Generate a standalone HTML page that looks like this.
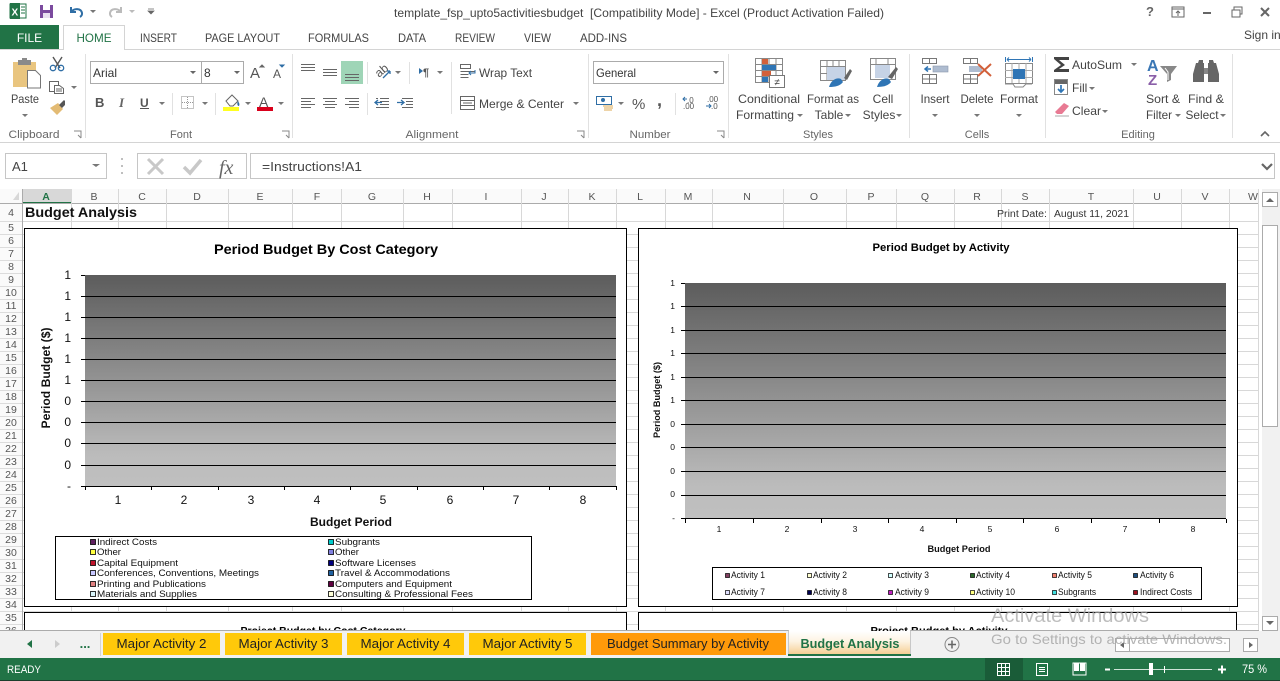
<!DOCTYPE html>
<html lang="en"><head><meta charset="utf-8"><title>Excel</title>
<style>
html,body{margin:0;padding:0;background:#fff;overflow:hidden;width:1280px;height:681px}
svg{display:block}
text{font-family:"Liberation Sans",sans-serif;white-space:pre}
.r{font-size:12px;fill:#444}
.g{font-size:11px;fill:#666;text-anchor:middle}
.t{font-size:12px;fill:#444;text-anchor:middle}
.c{font-size:10.5px;fill:#555;text-anchor:middle}
.n{font-size:10.5px;fill:#555;text-anchor:middle}
.l1{font-size:9.5px;fill:#111}
.l2{font-size:9px;fill:#111}
.tab{font-size:13px;fill:#222;text-anchor:middle}
</style></head><body>
<svg width="1280" height="681" viewBox="0 0 1280 681" xmlns="http://www.w3.org/2000/svg">
<defs>
<linearGradient id="pg" x1="0" y1="0" x2="0" y2="1"><stop offset="0" stop-color="#5c5c5c"/><stop offset=".5" stop-color="#939393"/><stop offset=".85" stop-color="#bbbbbb"/><stop offset="1" stop-color="#c0c0c0"/></linearGradient>
<linearGradient id="at" x1="0" y1="0" x2="0" y2="1"><stop offset="0" stop-color="#fff"/><stop offset=".45" stop-color="#fdf3e2"/><stop offset="1" stop-color="#f6cf95"/></linearGradient>
<pattern id="rows" x="0" y="221" width="10" height="13" patternUnits="userSpaceOnUse"><rect x="0" y="0" width="10" height="1" fill="#d8d8d8"/></pattern>
</defs>
<rect width="1280" height="681" fill="#fff"/>

<!-- title bar icons -->
<rect x="10" y="4" width="16" height="14" fill="#fff" stroke="#217346"/>
<rect x="10" y="3" width="10" height="16" fill="#217346"/>
<text x="11.500" y="15.500" style="font-size:10px;font-weight:bold;fill:#fff">X</text>
<path d="M21 7h4M21 10h4M21 13h4" stroke="#217346"/>
<rect x="40" y="5" width="13" height="13" fill="#7b4a9e"/>
<rect x="43" y="5" width="7" height="5" fill="#fff"/>
<rect x="43" y="13" width="7" height="5" fill="#e9e0f0"/>
<path d="M71 7v5h5M71 12c3-4 10-4 11 1 .4 2-.6 3-2 4" fill="none" stroke="#2f6ea5" stroke-width="2"/>
<path d="M90 10l3 3 3-3z" fill="#777"/>
<path d="M121 7v5h-5M121 12c-3-4-10-4-11 1-.4 2 .6 3 2 4" fill="none" stroke="#bbb" stroke-width="2"/>
<path d="M129 10l3 3 3-3z" fill="#bbb"/>
<path d="M148 9h6M148 11l3 3 3-3z" stroke="#666" fill="#666" stroke-width=".7"/>
<text x="394" y="17" style="font-size:12px;fill:#444" textLength="490" lengthAdjust="spacingAndGlyphs">template_fsp_upto5activitiesbudget  [Compatibility Mode] - Excel (Product Activation Failed)</text>
<text x="1146" y="16" style="font-size:13px;font-weight:bold;fill:#666">?</text>
<rect x="1172" y="7" width="12" height="10" fill="none" stroke="#666"/><path d="M1172 9h12M1178 16v-5M1176 13l2-2 2 2" fill="none" stroke="#666"/>
<path d="M1203 13h8" stroke="#666" stroke-width="2"/>
<rect x="1232" y="10" width="8" height="7" fill="none" stroke="#666"/><path d="M1234 10V7h8v7h-2" fill="none" stroke="#666"/>
<path d="M1261 8l8 8M1269 8l-8 8" stroke="#666" stroke-width="2"/>
<text x="1244" y="39" style="font-size:12px;fill:#444">Sign in</text>

<!-- tabs -->
<rect x="0" y="25" width="59" height="25" fill="#217346"/>
<text x="29.500" y="42" style="font-size:12px;fill:#fff;text-anchor:middle">FILE</text>
<path d="M0 49.500H63.500V25.500H124.500V49.500H1280" fill="none" stroke="#d4d4d4"/>
<text x="94" y="42" style="font-size:12px;fill:#217346;text-anchor:middle" textLength="35" lengthAdjust="spacingAndGlyphs">HOME</text>
<text x="140" y="42" class="r" textLength="37" lengthAdjust="spacingAndGlyphs">INSERT</text>
<text x="205" y="42" class="r" textLength="75" lengthAdjust="spacingAndGlyphs">PAGE LAYOUT</text>
<text x="308" y="42" class="r" textLength="61" lengthAdjust="spacingAndGlyphs">FORMULAS</text>
<text x="398" y="42" class="r" textLength="28" lengthAdjust="spacingAndGlyphs">DATA</text>
<text x="455" y="42" class="r" textLength="40" lengthAdjust="spacingAndGlyphs">REVIEW</text>
<text x="524" y="42" class="r" textLength="27" lengthAdjust="spacingAndGlyphs">VIEW</text>
<text x="580" y="42" class="r" textLength="47" lengthAdjust="spacingAndGlyphs">ADD-INS</text>

<!-- ribbon group separators -->
<path d="M85.500 54V138M292.500 54V138M588.500 54V138M728.500 54V138M909.500 54V138M1045.500 54V138M1232.500 54V138" stroke="#e1e1e1"/>
<path d="M0 142.500H1280" stroke="#d4d4d4"/>
<text x="34" y="138" class="g" textLength="51" lengthAdjust="spacingAndGlyphs">Clipboard</text>
<text x="181" y="138" class="g">Font</text>
<text x="432" y="138" class="g" textLength="53" lengthAdjust="spacingAndGlyphs">Alignment</text>
<text x="650" y="138" class="g" textLength="41" lengthAdjust="spacingAndGlyphs">Number</text>
<text x="818" y="138" class="g">Styles</text>
<text x="977" y="138" class="g">Cells</text>
<text x="1138" y="138" class="g">Editing</text>
<path d="M74 131h7v7M78 135l3 3M282 131h7v7M286 135l3 3M577 131h7v7M581 135l3 3M717 131h7v7M721 135l3 3" fill="none" stroke="#888"/>
<path d="M1261 136l4-4 4 4" fill="none" stroke="#666" stroke-width="1.600"/>

<!-- clipboard -->
<rect x="13" y="62" width="23" height="25" fill="#e9c57f"/>
<rect x="18" y="60" width="13" height="5" fill="#8a8a8a"/><rect x="22" y="58" width="5" height="4" fill="#8a8a8a"/>
<path d="M27.500 70.500h8l5 5v12.500h-13z" fill="#fff" stroke="#777"/>
<text x="25" y="103" class="t" textLength="28" lengthAdjust="spacingAndGlyphs">Paste</text>
<path d="M22 114l3 3 3-3z" fill="#777"/>
<path d="M53 57l7 11M62 57l-7 11" stroke="#555" stroke-width="1.400"/>
<circle cx="53" cy="68" r="2.700" fill="none" stroke="#2f6ea5" stroke-width="1.300"/><circle cx="61" cy="68" r="2.700" fill="none" stroke="#2f6ea5" stroke-width="1.300"/>
<path d="M49.500 81.500h9v10h-9z" fill="#fff" stroke="#666"/><path d="M54.500 85.500h5l4 3v5h-9z" fill="#fff" stroke="#666"/><path d="M56 89h6M56 91h6" stroke="#666"/>
<path d="M71 86l3 3 3-3z" fill="#777"/>
<path d="M50 108l8-5 5 6-6 6z" fill="#e3bb74"/><path d="M59 105l5-5 1 1v4l-3 3z" fill="#555"/>

<!-- font -->
<rect x="90.500" y="61.500" width="111" height="22" fill="#fff" stroke="#ababab"/>
<rect x="201.500" y="61.500" width="42" height="22" fill="#fff" stroke="#ababab"/>
<text x="93" y="77" style="font-size:12px;fill:#333">Arial</text>
<text x="204" y="77" style="font-size:12px;fill:#333">8</text>
<path d="M190 71l3 3 3-3zM234 71l3 3 3-3z" fill="#666"/>
<text x="250" y="78" style="font-size:15px;fill:#555">A</text><path d="M260 67l2-2 2 2z" fill="#666" stroke="#666"/>
<text x="273" y="78" style="font-size:12px;fill:#555">A</text><path d="M280 65l2 2 2-2z" fill="#2f6ea5" stroke="#2f6ea5"/>
<text x="95" y="107" style="font-size:13px;font-weight:bold;fill:#555">B</text>
<text x="119" y="107" style="font-size:13px;font-weight:bold;font-style:italic;fill:#666;font-family:'Liberation Serif',serif">I</text>
<text x="140" y="107" style="font-size:12px;font-weight:bold;fill:#555">U</text><path d="M140 108.500h9" stroke="#555"/>
<path d="M159 102l3 3 3-3z" fill="#777"/>
<path d="M172.500 93v22" stroke="#e1e1e1"/>
<rect x="181.500" y="96.500" width="12" height="12" fill="none" stroke="#888" stroke-dasharray="1 1"/><path d="M187.500 97v12M182 102.500h12" stroke="#999" stroke-dasharray="1 1"/>
<path d="M202 102l3 3 3-3z" fill="#777"/>
<path d="M215.500 93v22" stroke="#e1e1e1"/>
<path d="M226 101l6-6 6 6-5 5h-3z" fill="#fff" stroke="#666"/><path d="M238 101c1 2 2 3 1 5-2 0-2-3-1-5z" fill="#2f6ea5"/>
<rect x="223" y="107" width="16" height="4" fill="#ffff20"/>
<path d="M245 102l3 3 3-3z" fill="#777"/>
<text x="259" y="107" style="font-size:14px;fill:#555">A</text>
<rect x="257" y="107" width="16" height="4" fill="#d9001b"/>
<path d="M278 102l3 3 3-3z" fill="#777"/>

<!-- alignment -->
<path d="M301 64.500h14M301 67.500h14M301 70.500h14" stroke="#666"/>
<path d="M323 69.500h14M323 72.500h14M323 75.500h14" stroke="#666"/>
<rect x="341" y="61" width="22" height="23" fill="#9fd5b7"/>
<path d="M345 74.500h14M345 77.500h14M345 80.500h14" stroke="#666"/>
<path d="M367.500 62v22" stroke="#e1e1e1"/>
<text x="375" y="75" style="font-size:12px;fill:#555" transform="rotate(-40 381 71)">ab</text><path d="M383 78l7-7M390 71h-3M390 71v3" fill="none" stroke="#2f6ea5" stroke-width="1.300"/>
<path d="M395 71l3 3 3-3z" fill="#777"/>
<path d="M409.500 62v22" stroke="#e1e1e1"/>
<path d="M419 68l4 3-4 3z" fill="#2f6ea5"/>
<text x="423" y="76" style="font-size:11px;font-weight:bold;fill:#555">¶</text>
<path d="M437 71l3 3 3-3z" fill="#777"/>
<path d="M451.500 62v52" stroke="#e1e1e1"/>
<path d="M301 98.500h14M301 101.500h10M301 104.500h14M301 107.500h10M323 98.500h14M325 101.500h10M323 104.500h14M325 107.500h10M345 98.500h14M349 101.500h10M345 104.500h14M349 107.500h10" stroke="#666"/>
<path d="M367.500 93v22" stroke="#e1e1e1"/>
<path d="M380 98.500h9M380 101.500h9M380 104.500h9M376 107.500h13M376 98.500h2" stroke="#666"/><path d="M375 102.500h7M378 100l-3 2.500 3 2.500" fill="none" stroke="#2f6ea5" stroke-width="1.300"/>
<path d="M402 98.500h11M402 107.500h11M406 101.500h7M406 104.500h7" stroke="#666"/><path d="M397 102.500h7M401 100l3 2.500-3 2.500" fill="none" stroke="#2f6ea5" stroke-width="1.300"/>
<path d="M460.500 64.500h10v4h-10zM460.500 71.500h14M460.500 74.500h8M460.500 77.500h8" fill="none" stroke="#666"/><path d="M475 70v3h-6m2-2l-2 2 2 2" fill="none" stroke="#2f6ea5"/>
<text x="479" y="77" class="r" textLength="53" lengthAdjust="spacingAndGlyphs">Wrap Text</text>
<rect x="460.500" y="96.500" width="14" height="13" fill="none" stroke="#666"/><path d="M461 100.500h13M461 105.500h13M463 103h9" stroke="#666"/>
<text x="479" y="108" class="r" textLength="85" lengthAdjust="spacingAndGlyphs">Merge &amp; Center</text>
<path d="M573 102l3 3 3-3z" fill="#777"/>

<!-- number -->
<rect x="593.500" y="61.500" width="130" height="22" fill="#fff" stroke="#ababab"/>
<text x="596" y="77" style="font-size:12px;fill:#333" textLength="40" lengthAdjust="spacingAndGlyphs">General</text>
<path d="M713 71l3 3 3-3z" fill="#666"/>
<rect x="596.500" y="96.500" width="15" height="8" fill="#fff" stroke="#2f6ea5"/><circle cx="603" cy="100" r="2" fill="#2f6ea5"/>
<path d="M603 106h10M604 108h9M604 110h8" stroke="#e3bb74" stroke-width="1.300"/>
<path d="M618 102l3 3 3-3z" fill="#777"/>
<text x="632" y="109" style="font-size:15px;fill:#555">%</text>
<text x="657" y="106" style="font-size:18px;font-weight:bold;fill:#555">,</text>
<path d="M675.500 93v22" stroke="#e1e1e1"/>
<text x="687" y="103" style="font-size:8px;fill:#555">.0</text><text x="683" y="109" style="font-size:8px;fill:#555">.00</text><path d="M683 99h4M685 97l-2 2 2 2" fill="none" stroke="#2f6ea5"/>
<text x="707" y="102" style="font-size:8px;fill:#555">.00</text><text x="711" y="109" style="font-size:8px;fill:#555">.0</text><path d="M706 106h5M709 104l2 2-2 2" fill="none" stroke="#2f6ea5"/>

<!-- styles -->
<g fill="none" stroke="#888">
<rect x="755.500" y="58.500" width="27" height="24" fill="#fff"/><path d="M762 58v24M769 58v24M776 58v24M755 64.500h28M755 70.500h28M755 76.500h28"/>
</g>
<rect x="762" y="59" width="6" height="5" fill="#d2603a"/><rect x="762" y="65" width="14" height="5" fill="#2f75b5"/><rect x="762" y="71" width="9" height="5" fill="#d2603a"/><rect x="762" y="77" width="6" height="5" fill="#2f75b5"/>
<rect x="769.500" y="75.500" width="15" height="12" fill="#fff" stroke="#777"/><text x="777" y="85.500" style="font-size:10px;fill:#444;text-anchor:middle">≠</text>
<text x="769" y="103" class="t" textLength="62" lengthAdjust="spacingAndGlyphs">Conditional</text>
<text x="765" y="119" class="t" textLength="58" lengthAdjust="spacingAndGlyphs">Formatting</text>
<path d="M797 114l3 3 3-3z" fill="#777"/>
<g fill="none" stroke="#888">
<rect x="820.500" y="60.500" width="25" height="20" fill="#fff"/><path d="M827 60v20M833 60v20M839 60v20M820 66.500h25M820 73.500h25"/>
</g>
<rect x="827" y="67" width="18" height="13" fill="#c6d3e6"/>
<path d="M844 78l6-9 2 2-5 9z" fill="#666"/><path d="M829 87c2-7 8-10 12-8l2 3c-3 4-8 5-14 5z" fill="#2f75b5"/>
<text x="833" y="103" class="t" textLength="52" lengthAdjust="spacingAndGlyphs">Format as</text>
<text x="829" y="119" class="t">Table</text>
<path d="M845 114l3 3 3-3z" fill="#777"/>
<g fill="none" stroke="#888">
<rect x="870.500" y="58.500" width="25" height="21" fill="#fff"/><path d="M870 64.500h26M876 58v6M888 58v6"/>
</g>
<rect x="875" y="65" width="15" height="13" fill="#c6d3e6"/>
<path d="M888 77l8-10 2 2-6 10z" fill="#666"/><path d="M877 87c2-7 8-10 12-8l2 3c-3 4-8 5-14 5z" fill="#2f75b5"/>
<text x="883" y="103" class="t">Cell</text>
<text x="879" y="119" class="t">Styles</text>
<path d="M896 114l3 3 3-3z" fill="#777"/>

<!-- cells -->
<g fill="none" stroke="#777">
<path d="M922.500 58.500h14v5h-14zM929.500 58.500v5M922.500 74.500h14v9h-14zM929.500 74.500v9M922.500 79h14"/>
</g>
<rect x="933" y="66" width="15" height="6" fill="#aebcd0" stroke="#8a98ac" stroke-width=".6"/>
<path d="M925 69h6M928 66.500L925 69l3 2.500" fill="none" stroke="#2f75b5" stroke-width="1.500"/>
<text x="935" y="103" class="t" textLength="29" lengthAdjust="spacingAndGlyphs">Insert</text>
<path d="M932 114l3 3 3-3z" fill="#777"/>
<g fill="none" stroke="#777">
<path d="M963.500 58.500h14v5h-14zM970.500 58.500v5M963.500 74.500h14v9h-14zM970.500 74.500v9M963.500 79h14"/>
</g>
<rect x="969" y="66" width="13" height="6" fill="#aebcd0"/>
<path d="M978 64l13 12M991 64l-13 12" stroke="#d2603a" stroke-width="2"/>
<text x="977" y="103" class="t" textLength="33" lengthAdjust="spacingAndGlyphs">Delete</text>
<path d="M974 114l3 3 3-3z" fill="#777"/>
<rect x="1005.500" y="63.500" width="27" height="20" fill="#fff" stroke="#888"/>
<path d="M1012 63v20M1019 63v20M1026 63v20M1005 70.500h28M1005 77.500h28" stroke="#aaa"/>
<rect x="1013" y="69" width="12" height="10" fill="#2f75b5"/>
<path d="M1005.500 57v5M1032.500 57v5M1007 59.500h24M1007 59.500l2-2M1007 59.500l2 2M1031 59.500l-2-2M1031 59.500l-2 2" fill="none" stroke="#2f75b5"/>
<path d="M1005 84h8l2 3h8l3-3h6" fill="none" stroke="#888"/>
<text x="1019" y="103" class="t" textLength="38" lengthAdjust="spacingAndGlyphs">Format</text>
<path d="M1016 114l3 3 3-3z" fill="#777"/>

<!-- editing -->
<path d="M1054 57h15v3h-10l6 5-6 4h10v3h-15v-2l7-5-7-6z" fill="#444"/>
<text x="1072" y="69" class="r" textLength="50" lengthAdjust="spacingAndGlyphs">AutoSum</text>
<path d="M1131 63l3 3 3-3z" fill="#777"/>
<rect x="1054.500" y="79.500" width="13" height="15" fill="#fff" stroke="#888"/><rect x="1055" y="80" width="12" height="4" fill="#666"/>
<path d="M1061 85v7M1058 89l3 3 3-3" fill="none" stroke="#2f75b5" stroke-width="1.700"/>
<text x="1072" y="92" class="r">Fill</text>
<path d="M1089 87l3 3 3-3z" fill="#777"/>
<path d="M1055 112l9-9 5 3-7 8h-5z" fill="#e87a93"/><path d="M1055 116h14" stroke="#aaa"/>
<text x="1072" y="115" class="r" textLength="29" lengthAdjust="spacingAndGlyphs">Clear</text>
<path d="M1102 110l3 3 3-3z" fill="#777"/>
<text x="1147" y="71" style="font-size:16px;font-weight:bold;fill:#3a77b5">A</text>
<text x="1148" y="85" style="font-size:15px;font-weight:bold;fill:#8a5fa8">Z</text>
<path d="M1160 66h17l-6 8v6l-4 2v-8z" fill="#888"/><path d="M1165 68l3 4v8" stroke="#fff" fill="none"/>
<path d="M1193 82v-8l3-11h2l1-3h4v3h1v19zM1219 82v-8l-3-11h-2l-1-3h-4v3h-1v19z" fill="#666"/>
<path d="M1204 68h4v6h-4z" fill="#888"/>
<text x="1163" y="103" class="t" textLength="34" lengthAdjust="spacingAndGlyphs">Sort &amp;</text>
<text x="1159" y="119" class="t" textLength="26" lengthAdjust="spacingAndGlyphs">Filter</text>
<path d="M1175 114l3 3 3-3z" fill="#777"/>
<text x="1206" y="103" class="t" textLength="36" lengthAdjust="spacingAndGlyphs">Find &amp;</text>
<text x="1202" y="119" class="t" textLength="33" lengthAdjust="spacingAndGlyphs">Select</text>
<path d="M1220 114l3 3 3-3z" fill="#777"/>

<!-- formula bar -->
<rect x="5.500" y="153.500" width="101" height="25" fill="#fff" stroke="#c6c6c6"/>
<text x="12" y="171" style="font-size:13px;fill:#444">A1</text>
<path d="M92 164l4 3 4-3z" fill="#777"/>
<path d="M122 158v2M122 165v2M122 172v2" stroke="#aaa" stroke-width="1.500"/>
<rect x="137.500" y="153.500" width="109" height="25" fill="#fff" stroke="#c6c6c6"/>
<path d="M148 159l15 15M163 159l-15 15" stroke="#c8c8c8" stroke-width="3"/>
<path d="M184 167l6 6 11-13" fill="none" stroke="#c8c8c8" stroke-width="3.500"/>
<text x="219" y="174" style="font-size:20px;font-style:italic;font-family:'Liberation Serif',serif;fill:#666">fx</text>
<rect x="250.500" y="153.500" width="1024" height="25" fill="#fff" stroke="#c6c6c6"/>
<text x="262" y="171" style="font-size:13px;fill:#444" textLength="100" lengthAdjust="spacingAndGlyphs">=Instructions!A1</text>
<path d="M1262 164l5 5 5-5" fill="none" stroke="#666" stroke-width="2.200"/>

<!-- sheet grid -->
<rect x="0" y="189" width="1259" height="14" fill="#fafafa"/>
<rect x="22" y="189" width="49" height="14" fill="#d8d8d8"/>
<rect x="22" y="202" width="49" height="2" fill="#217346"/>
<path d="M0 203.500H1259" stroke="#ababab"/>
<path d="M22.500 189V630" stroke="#ababab"/>
<path d="M19 192v8h-6z" fill="#d8d8d8"/>
<rect x="23" y="221" width="1236" height="410" fill="url(#rows)"/>
<path d="M71.500 189V228M118.500 189V228M166.500 189V228M228.500 189V228M292.500 189V228M341.500 189V228M403.500 189V228M452.500 189V228M521.500 189V228M568.500 189V228M616.500 189V228M665.500 189V228M712.500 189V228M783.500 189V228M846.500 189V228M896.500 189V228M954.500 189V228M1001.500 189V228M1049.500 189V228M1133.500 189V228M1181.500 189V228M1229.500 189V631M1258.500 189V631" stroke="#d8d8d8"/>
<path d="M71.500 607V612M118.500 607V612M166.500 607V612M228.500 607V612M292.500 607V612M341.500 607V612M403.500 607V612M452.500 607V612M521.500 607V612M568.500 607V612M616.500 607V612M665.500 607V612M712.500 607V612M783.500 607V612M846.500 607V612M896.500 607V612M954.500 607V612M1001.500 607V612M1049.500 607V612M1133.500 607V612M1181.500 607V612" stroke="#d8d8d8"/>
<text x="46" y="200" class="c" style="fill:#217346;font-weight:bold">A</text>
<text x="94" y="200" class="c">B</text><text x="142" y="200" class="c">C</text><text x="197" y="200" class="c">D</text><text x="260" y="200" class="c">E</text><text x="317" y="200" class="c">F</text><text x="372" y="200" class="c">G</text><text x="427" y="200" class="c">H</text><text x="486" y="200" class="c">I</text><text x="544" y="200" class="c">J</text><text x="592" y="200" class="c">K</text><text x="640" y="200" class="c">L</text><text x="688" y="200" class="c">M</text><text x="747" y="200" class="c">N</text><text x="814" y="200" class="c">O</text><text x="871" y="200" class="c">P</text><text x="925" y="200" class="c">Q</text><text x="977" y="200" class="c">R</text><text x="1025" y="200" class="c">S</text><text x="1091" y="200" class="c">T</text><text x="1157" y="200" class="c">U</text><text x="1205" y="200" class="c">V</text><text x="1253" y="200" class="c">W</text>
<rect x="0" y="204" width="22" height="427" fill="#fafafa"/>
<path d="M0 221.500H22M0 234.500H22M0 247.500H22M0 260.500H22M0 273.500H22M0 286.500H22M0 299.500H22M0 312.500H22M0 325.500H22M0 338.500H22M0 351.500H22M0 364.500H22M0 377.500H22M0 390.500H22M0 403.500H22M0 416.500H22M0 429.500H22M0 442.500H22M0 455.500H22M0 468.500H22M0 481.500H22M0 494.500H22M0 507.500H22M0 520.500H22M0 533.500H22M0 546.500H22M0 559.500H22M0 572.500H22M0 585.500H22M0 598.500H22M0 611.500H22M0 624.500H22" stroke="#dcdcdc"/>
<text x="11" y="216" class="n">4</text><text x="11" y="231" class="n">5</text><text x="11" y="244" class="n">6</text><text x="11" y="257" class="n">7</text><text x="11" y="270" class="n">8</text><text x="11" y="283" class="n">9</text><text x="11" y="296" class="n">10</text><text x="11" y="309" class="n">11</text><text x="11" y="322" class="n">12</text><text x="11" y="335" class="n">13</text><text x="11" y="348" class="n">14</text><text x="11" y="361" class="n">15</text><text x="11" y="374" class="n">16</text><text x="11" y="387" class="n">17</text><text x="11" y="400" class="n">18</text><text x="11" y="413" class="n">19</text><text x="11" y="426" class="n">20</text><text x="11" y="439" class="n">21</text><text x="11" y="452" class="n">22</text><text x="11" y="465" class="n">23</text><text x="11" y="478" class="n">24</text><text x="11" y="491" class="n">25</text><text x="11" y="504" class="n">26</text><text x="11" y="517" class="n">27</text><text x="11" y="530" class="n">28</text><text x="11" y="543" class="n">29</text><text x="11" y="556" class="n">30</text><text x="11" y="569" class="n">31</text><text x="11" y="582" class="n">32</text><text x="11" y="595" class="n">33</text><text x="11" y="608" class="n">34</text><text x="11" y="621" class="n">35</text><text x="11" y="634" class="n">36</text>

<text x="25" y="217" style="font-size:14px;font-weight:bold;fill:#111" textLength="112" lengthAdjust="spacingAndGlyphs">Budget Analysis</text>
<text x="997" y="217" style="font-size:10px;fill:#333" textLength="50" lengthAdjust="spacingAndGlyphs">Print Date:</text>
<text x="1054" y="217" style="font-size:10px;fill:#333" textLength="75" lengthAdjust="spacingAndGlyphs">August 11, 2021</text>

<!-- chart 1 -->
<rect x="24.500" y="228.500" width="602" height="378" fill="#fff" stroke="#000"/>
<text x="326" y="254" style="font-size:14px;font-weight:bold;fill:#000;text-anchor:middle" textLength="224" lengthAdjust="spacingAndGlyphs">Period Budget By Cost Category</text>
<rect x="85" y="275" width="531" height="211" fill="url(#pg)"/>
<path d="M85 296.500H616M85 317.500H616M85 338.500H616M85 359.500H616M85 380.500H616M85 401.500H616M85 422.500H616M85 443.500H616M85 465.500H616M85 486.500H616" stroke="#000"/>
<path d="M81 275.500H85M81 296.500H85M81 317.500H85M81 338.500H85M81 359.500H85M81 380.500H85M81 401.500H85M81 422.500H85M81 443.500H85M81 465.500H85M81 486.500H85" stroke="#000"/>
<path d="M85.500 486V490M151.500 486V490M218.500 486V490M284.500 486V490M350.500 486V490M417.500 486V490M483.500 486V490M549.500 486V490M616.500 486V490" stroke="#000"/>
<g style="fill:#111;text-anchor:end">
<text x="71" y="279" style="font-size:12px">1</text><text x="71" y="300" style="font-size:12px">1</text><text x="71" y="321" style="font-size:12px">1</text><text x="71" y="342" style="font-size:12px">1</text><text x="71" y="363" style="font-size:12px">1</text><text x="71" y="384" style="font-size:12px">1</text><text x="71" y="405" style="font-size:12px">0</text><text x="71" y="426" style="font-size:12px">0</text><text x="71" y="447" style="font-size:12px">0</text><text x="71" y="469" style="font-size:12px">0</text><text x="71" y="490" style="font-size:12px">-</text>
</g>
<g style="fill:#111;text-anchor:middle">
<text x="118" y="504" style="font-size:12px">1</text><text x="184" y="504" style="font-size:12px">2</text><text x="251" y="504" style="font-size:12px">3</text><text x="317" y="504" style="font-size:12px">4</text><text x="383" y="504" style="font-size:12px">5</text><text x="450" y="504" style="font-size:12px">6</text><text x="516" y="504" style="font-size:12px">7</text><text x="583" y="504" style="font-size:12px">8</text>
</g>
<text x="50" y="378" transform="rotate(-90 50 378)" style="font-size:12px;font-weight:bold;fill:#111;text-anchor:middle" textLength="101" lengthAdjust="spacingAndGlyphs">Period Budget ($)</text>
<text x="351" y="526" style="font-size:12px;font-weight:bold;fill:#111;text-anchor:middle" textLength="82" lengthAdjust="spacingAndGlyphs">Budget Period</text>
<rect x="55.500" y="536.500" width="476" height="63" fill="#fff" stroke="#000"/>
<g stroke="#000" stroke-width=".8">
<rect x="90.500" y="539.500" width="5" height="5" fill="#602060"/><rect x="90.500" y="549.500" width="5" height="5" fill="#ffff40"/><rect x="90.500" y="560.500" width="5" height="5" fill="#c0142c"/><rect x="90.500" y="570.500" width="5" height="5" fill="#c8c8ff"/><rect x="90.500" y="581.500" width="5" height="5" fill="#e08080"/><rect x="90.500" y="591.500" width="5" height="5" fill="#d8f4fa"/>
<rect x="328.500" y="539.500" width="5" height="5" fill="#00cccc"/><rect x="328.500" y="549.500" width="5" height="5" fill="#8080e0"/><rect x="328.500" y="560.500" width="5" height="5" fill="#000080"/><rect x="328.500" y="570.500" width="5" height="5" fill="#2060a0"/><rect x="328.500" y="581.500" width="5" height="5" fill="#600040"/><rect x="328.500" y="591.500" width="5" height="5" fill="#ffffd8"/>
</g>
<text x="97" y="545" class="l1" textLength="60" lengthAdjust="spacingAndGlyphs">Indirect Costs</text>
<text x="97" y="555" class="l1" textLength="24" lengthAdjust="spacingAndGlyphs">Other</text>
<text x="97" y="566" class="l1" textLength="81" lengthAdjust="spacingAndGlyphs">Capital Equipment</text>
<text x="97" y="576" class="l1" textLength="162" lengthAdjust="spacingAndGlyphs">Conferences, Conventions, Meetings</text>
<text x="97" y="587" class="l1" textLength="109" lengthAdjust="spacingAndGlyphs">Printing and Publications</text>
<text x="97" y="597" class="l1" textLength="100" lengthAdjust="spacingAndGlyphs">Materials and Supplies</text>
<text x="335" y="545" class="l1" textLength="45" lengthAdjust="spacingAndGlyphs">Subgrants</text>
<text x="335" y="555" class="l1" textLength="24" lengthAdjust="spacingAndGlyphs">Other</text>
<text x="335" y="566" class="l1" textLength="81" lengthAdjust="spacingAndGlyphs">Software Licenses</text>
<text x="335" y="576" class="l1" textLength="115" lengthAdjust="spacingAndGlyphs">Travel &amp; Accommodations</text>
<text x="335" y="587" class="l1" textLength="117" lengthAdjust="spacingAndGlyphs">Computers and Equipment</text>
<text x="335" y="597" class="l1" textLength="138" lengthAdjust="spacingAndGlyphs">Consulting &amp; Professional Fees</text>

<!-- chart 2 -->
<rect x="638.500" y="228.500" width="599" height="378" fill="#fff" stroke="#000"/>
<text x="941" y="251" style="font-size:11px;font-weight:bold;fill:#000;text-anchor:middle" textLength="137" lengthAdjust="spacingAndGlyphs">Period Budget by Activity</text>
<rect x="685" y="283" width="541" height="236" fill="url(#pg)"/>
<path d="M685 306.500H1226M685 330.500H1226M685 353.500H1226M685 377.500H1226M685 400.500H1226M685 424.500H1226M685 447.500H1226M685 471.500H1226M685 495.500H1226M685 518.500H1226" stroke="#000"/>
<path d="M681 283.500H685M681 306.500H685M681 330.500H685M681 353.500H685M681 377.500H685M681 400.500H685M681 424.500H685M681 447.500H685M681 471.500H685M681 495.500H685M681 518.500H685" stroke="#000"/>
<path d="M685.500 519V523M753.500 519V523M821.500 519V523M888.500 519V523M956.500 519V523M1023.500 519V523M1091.500 519V523M1159.500 519V523M1226.500 519V523" stroke="#000"/>
<g style="fill:#111;text-anchor:end">
<text x="675" y="286" style="font-size:8.500px">1</text><text x="675" y="309" style="font-size:8.500px">1</text><text x="675" y="333" style="font-size:8.500px">1</text><text x="675" y="356" style="font-size:8.500px">1</text><text x="675" y="380" style="font-size:8.500px">1</text><text x="675" y="403" style="font-size:8.500px">1</text><text x="675" y="427" style="font-size:8.500px">0</text><text x="675" y="450" style="font-size:8.500px">0</text><text x="675" y="474" style="font-size:8.500px">0</text><text x="675" y="497" style="font-size:8.500px">0</text><text x="675" y="521" style="font-size:8.500px">-</text>
</g>
<g style="fill:#111;text-anchor:middle">
<text x="719" y="532" style="font-size:8.500px">1</text><text x="787" y="532" style="font-size:8.500px">2</text><text x="855" y="532" style="font-size:8.500px">3</text><text x="922" y="532" style="font-size:8.500px">4</text><text x="990" y="532" style="font-size:8.500px">5</text><text x="1057" y="532" style="font-size:8.500px">6</text><text x="1125" y="532" style="font-size:8.500px">7</text><text x="1193" y="532" style="font-size:8.500px">8</text>
</g>
<text x="660" y="400" transform="rotate(-90 660 400)" style="font-size:9px;font-weight:bold;fill:#111;text-anchor:middle" textLength="76" lengthAdjust="spacingAndGlyphs">Period Budget ($)</text>
<text x="959" y="552" style="font-size:9px;font-weight:bold;fill:#111;text-anchor:middle" textLength="63" lengthAdjust="spacingAndGlyphs">Budget Period</text>
<rect x="712.500" y="567.500" width="489" height="32" fill="#fff" stroke="#000"/>
<g stroke="#000" stroke-width=".7">
<rect x="725.500" y="573.500" width="4" height="4" fill="#804060"/><rect x="807.500" y="573.500" width="4" height="4" fill="#ffffd0"/><rect x="888.500" y="573.500" width="4" height="4" fill="#d0ffff"/><rect x="970.500" y="573.500" width="4" height="4" fill="#2c6a2c"/><rect x="1052.500" y="573.500" width="4" height="4" fill="#f08070"/><rect x="1133.500" y="573.500" width="4" height="4" fill="#205080"/>
<rect x="725.500" y="590.500" width="4" height="4" fill="#e0e0ff"/><rect x="807.500" y="590.500" width="4" height="4" fill="#000050"/><rect x="888.500" y="590.500" width="4" height="4" fill="#c020c0"/><rect x="970.500" y="590.500" width="4" height="4" fill="#ffff80"/><rect x="1052.500" y="590.500" width="4" height="4" fill="#40e0e0"/><rect x="1133.500" y="590.500" width="4" height="4" fill="#a01020"/>
</g>
<text x="731" y="578" class="l2" textLength="34" lengthAdjust="spacingAndGlyphs">Activity 1</text><text x="813" y="578" class="l2" textLength="34" lengthAdjust="spacingAndGlyphs">Activity 2</text><text x="895" y="578" class="l2" textLength="34" lengthAdjust="spacingAndGlyphs">Activity 3</text><text x="976" y="578" class="l2" textLength="34" lengthAdjust="spacingAndGlyphs">Activity 4</text><text x="1058" y="578" class="l2" textLength="34" lengthAdjust="spacingAndGlyphs">Activity 5</text><text x="1140" y="578" class="l2" textLength="34" lengthAdjust="spacingAndGlyphs">Activity 6</text>
<text x="731" y="595" class="l2" textLength="34" lengthAdjust="spacingAndGlyphs">Activity 7</text><text x="813" y="595" class="l2" textLength="34" lengthAdjust="spacingAndGlyphs">Activity 8</text><text x="895" y="595" class="l2" textLength="34" lengthAdjust="spacingAndGlyphs">Activity 9</text><text x="976" y="595" class="l2" textLength="39" lengthAdjust="spacingAndGlyphs">Activity 10</text><text x="1058" y="595" class="l2" textLength="38" lengthAdjust="spacingAndGlyphs">Subgrants</text><text x="1140" y="595" class="l2" textLength="52" lengthAdjust="spacingAndGlyphs">Indirect Costs</text>

<!-- lower charts -->
<rect x="24.500" y="612.500" width="602" height="40" fill="#fff" stroke="#000"/>
<rect x="638.500" y="612.500" width="598" height="40" fill="#fff" stroke="#000"/>
<text x="323" y="634" style="font-size:10.500px;font-weight:bold;fill:#000;text-anchor:middle" textLength="165" lengthAdjust="spacingAndGlyphs">Project Budget by Cost Category</text>
<text x="939" y="634" style="font-size:10.500px;font-weight:bold;fill:#000;text-anchor:middle" textLength="137" lengthAdjust="spacingAndGlyphs">Project Budget by Activity</text>

<!-- scrollbar vertical -->
<rect x="1259" y="189" width="21" height="442" fill="#f1f1f1"/>
<rect x="1259" y="189" width="3" height="442" fill="#fff"/>
<rect x="1262.500" y="192.500" width="15" height="14" fill="#fff" stroke="#ababab"/>
<path d="M1266 202l4-4 4 4z" fill="#666"/>
<rect x="1262.500" y="225.500" width="15" height="201" fill="#fff" stroke="#ababab"/>
<rect x="1262.500" y="616.500" width="15" height="14" fill="#fff" stroke="#ababab"/>
<path d="M1266 621l4 4 4-4z" fill="#666"/>

<!-- tab bar -->
<rect x="0" y="631" width="1280" height="27" fill="#f1f1f1"/>
<path d="M0 630.500H789M910 630.500H1259" stroke="#ababab"/>
<path d="M32 640l-5 4 5 4z" fill="#217346"/><path d="M55 640l5 4-5 4z" fill="#ccc"/>
<text x="85" y="648" style="font-size:13px;font-weight:bold;fill:#217346;text-anchor:middle">...</text>
<path d="M100.500 633V656" stroke="#d4d4d4"/>
<rect x="103" y="633" width="117" height="22" fill="#ffc90a"/>
<rect x="225" y="633" width="117" height="22" fill="#ffc90a"/>
<rect x="347" y="633" width="117" height="22" fill="#ffc90a"/>
<rect x="469" y="633" width="117" height="22" fill="#ffc90a"/>
<rect x="591" y="633" width="195" height="22" fill="#ff9a0a"/>
<text x="161.500" y="648" class="tab" textLength="90" lengthAdjust="spacingAndGlyphs">Major Activity 2</text>
<text x="283.500" y="648" class="tab" textLength="90" lengthAdjust="spacingAndGlyphs">Major Activity 3</text>
<text x="405.500" y="648" class="tab" textLength="90" lengthAdjust="spacingAndGlyphs">Major Activity 4</text>
<text x="527.500" y="648" class="tab" textLength="90" lengthAdjust="spacingAndGlyphs">Major Activity 5</text>
<text x="688" y="648" class="tab" textLength="162" lengthAdjust="spacingAndGlyphs">Budget Summary by Activity</text>
<rect x="789" y="631" width="121" height="23" fill="url(#at)"/>
<path d="M788.500 630.500V655M910.500 630.500V655" stroke="#c8c8c8"/>
<rect x="788" y="654" width="123" height="2" fill="#217346"/>
<text x="850" y="648" style="font-size:13px;font-weight:bold;fill:#217346;text-anchor:middle" textLength="99" lengthAdjust="spacingAndGlyphs">Budget Analysis</text>
<circle cx="952" cy="644.500" r="7" fill="none" stroke="#888"/><path d="M948 644.500h8M952 640.500v8" stroke="#666" stroke-width="1.500"/>
<!-- horizontal scrollbar -->
<rect x="1115.500" y="638.500" width="14" height="13" fill="#fff" stroke="#ababab"/><path d="M1124 642l-4 3 4 3z" fill="#666"/>
<rect x="1129.500" y="638.500" width="100" height="13" fill="#fff" stroke="#ababab"/>
<rect x="1243.500" y="638.500" width="14" height="13" fill="#fff" stroke="#ababab"/><path d="M1249 642l4 3-4 3z" fill="#666"/>
<!-- watermark -->
<text x="991" y="622" style="font-size:19px;fill:#a8a8a8;opacity:.75" textLength="158" lengthAdjust="spacingAndGlyphs">Activate Windows</text>
<text x="991" y="644" style="font-size:14px;fill:#a8a8a8;opacity:.85" textLength="236" lengthAdjust="spacingAndGlyphs">Go to Settings to activate Windows.</text>

<!-- status bar -->
<rect x="0" y="658" width="1280" height="23" fill="#217346"/>
<path d="M0 680.500H1280" stroke="#1c3d2b"/>
<text x="7" y="673" style="font-size:11px;fill:#fff" textLength="34" lengthAdjust="spacingAndGlyphs">READY</text>
<rect x="985" y="658" width="38" height="22" fill="#1a5c38"/>
<g fill="none" stroke="#fff">
<path d="M997.500 663.500h12v12h-12zM1001.500 663.500v12M1005.500 663.500v12M997.500 667.500h12M997.500 671.500h12"/>
<path d="M1036.500 663.500h11v12h-11zM1039 667.500h6M1039 669.500h6M1039 671.500h6"/>
</g>
<rect x="1073" y="663" width="13" height="12" fill="none" stroke="#fff"/><rect x="1074" y="663" width="5" height="8" fill="#fff"/><rect x="1080" y="663" width="5" height="8" fill="#fff"/>
<path d="M1105 669.500h5" stroke="#fff" stroke-width="2"/>
<path d="M1114 669.500h98" stroke="#cfe3d8"/>
<path d="M1164.500 666v7" stroke="#fff"/>
<rect x="1149" y="663" width="4" height="12" fill="#fff"/>
<path d="M1218 669.500h8M1222 665.500v8" stroke="#fff" stroke-width="2"/>
<text x="1242" y="673" style="font-size:11.500px;fill:#fff" textLength="25" lengthAdjust="spacingAndGlyphs">75 %</text>
</svg>
</body></html>
